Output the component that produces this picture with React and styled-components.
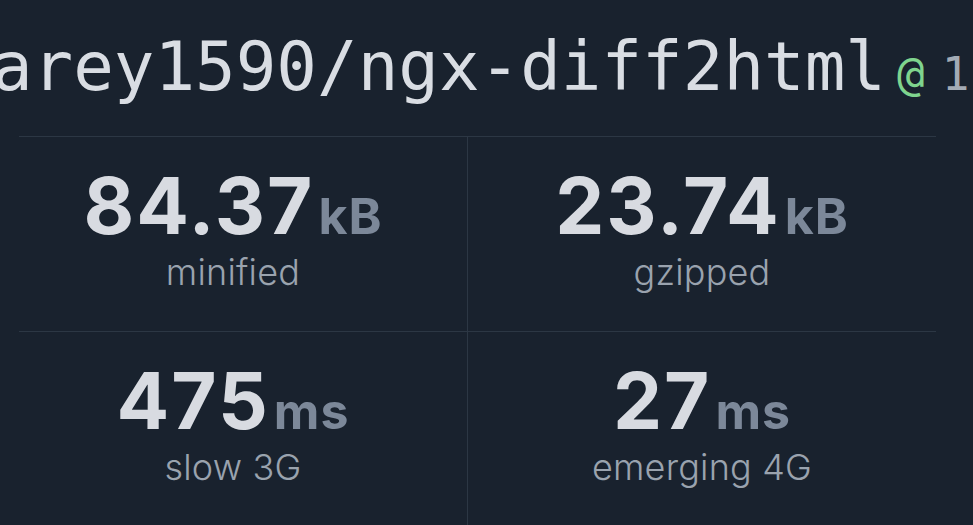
import React from "react";
import styled, { createGlobalStyle } from "styled-components";

const stats = [
  { value: "84.37", unit: "kB", label: "minified" },
  { value: "23.74", unit: "kB", label: "gzipped" },
  { value: "475", unit: "ms", label: "slow 3G" },
  { value: "27", unit: "ms", label: "emerging 4G" },
];

const GlobalStyle = createGlobalStyle`
  html, body {
    margin: 0;
    padding: 0;
    background: #19222e;
  }
  body {
    width: 973px;
    height: 525px;
    overflow: hidden;
  }
`;

const Page = styled.div`
  width: 973px;
  height: 525px;
  overflow: hidden;
  background: #19222e;
`;

const TitleRow = styled.h1`
  margin: 0;
  padding-top: 33px;
  height: 136px;
  box-sizing: border-box;
  display: flex;
  justify-content: center;
  align-items: baseline;
  white-space: nowrap;
  font-family: "DejaVu Sans Mono", "Liberation Mono", monospace;
  font-weight: 400;
  line-height: 1;
`;

const PackageName = styled.span`
  font-size: 67.5px;
  color: #d9dde3;
`;

const Version = styled.span`
  font-size: 46px;
  margin-left: 11px;
  color: #a3abb5;
  letter-spacing: -1px;
  .at {
    color: #7fd48e;
    letter-spacing: 0;
    margin-right: 17px;
  }
`;

const Grid = styled.div`
  margin-left: 19px;
  width: 917px;
  display: grid;
  grid-template-columns: 449px 468px;
`;

const Cell = styled.div`
  box-sizing: border-box;
  height: 195px;
  border-top: 1px solid #2c3744;
  border-right: ${(p) => (p.$left ? "1px solid #2c3744" : "none")};
  padding: 30px ${(p) => (p.$left ? "20px" : "0")} 0 0;
  display: flex;
  flex-direction: column;
  align-items: center;
  font-family: Inter, "Noto Sans", sans-serif;
`;

const Value = styled.div`
  display: flex;
  align-items: baseline;
  line-height: 1;
  font-size: 78px;
  font-weight: 700;
  color: #d8dbe1;
  letter-spacing: 2px;
`;

const Unit = styled.span`
  font-size: 50px;
  margin-left: 4px;
  color: #7c8899;
  letter-spacing: 1px;
`;

const Label = styled.div`
  margin-top: 9px;
  line-height: 1;
  font-size: 36px;
  font-weight: 300;
  letter-spacing: 0.2px;
  color: #9aa3ae;
`;

export default function App() {
  return (
    <Page>
      <GlobalStyle />
      <TitleRow>
        <PackageName>carey1590/ngx-diff2html</PackageName>
        <Version>
          <span className="at">@</span>1.0
        </Version>
      </TitleRow>
      <Grid>
        {stats.map((s, i) => (
          <Cell key={s.label} $left={i % 2 === 0}>
            <Value>
              {s.value}
              <Unit>{s.unit}</Unit>
            </Value>
            <Label>{s.label}</Label>
          </Cell>
        ))}
      </Grid>
    </Page>
  );
}
